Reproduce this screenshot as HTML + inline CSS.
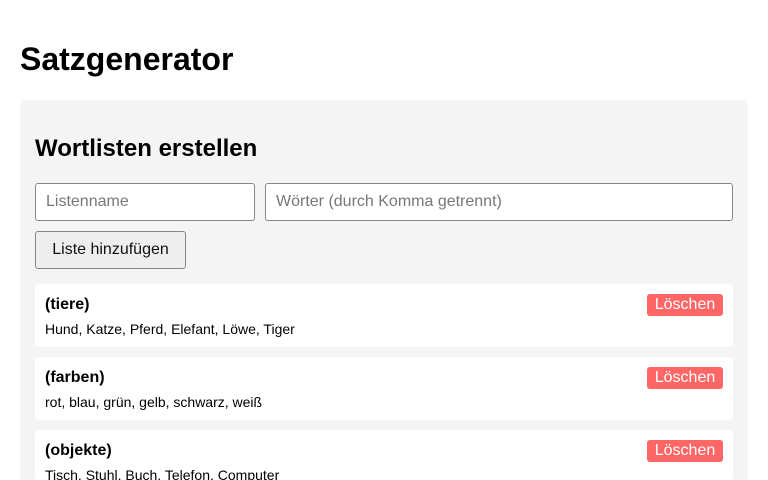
<!DOCTYPE html>
<html style="overflow:hidden;height:480px"><head><meta charset="utf-8"><style>
body{margin:0;padding:0 20px;font-family:"Liberation Sans",Arial,sans-serif;background:#fff;width:728px;height:480px;overflow:hidden;position:relative}
h1{font-size:32px;margin:0;position:absolute;top:40px;left:20px;line-height:38px}
.panel{position:absolute;top:100px;left:20px;width:728px;height:380px;background:#f4f4f4;border-radius:5px 5px 0 0}
h2{position:absolute;top:134px;left:35px;margin:0;font-size:24px;line-height:30px}
input{position:absolute;top:183px;height:38px;box-sizing:border-box;border:1px solid #888;border-radius:3px;font:16px "Liberation Sans",Arial,sans-serif;padding:0 10px;background:#fff}
input::placeholder{color:#777}
.btn{position:absolute;top:231px;left:35px;width:151px;height:38px;box-sizing:border-box;border:1px solid #888;border-radius:3px;background:#eee;font-size:16px;text-align:center;line-height:36px;color:#111}
.item{position:absolute;left:35px;width:698px;height:63px;background:#fff;border-radius:3px}
.t{position:absolute;left:10px;top:12px;font-weight:bold;font-size:16px}
.w{position:absolute;left:10px;top:37px;font-size:14px}
.del{position:absolute;left:612px;top:10px;width:76px;height:22px;background:#f66;color:#fff;border-radius:3px;font-size:16px;text-align:center;line-height:22px}
</style></head><body>
<h1>Satzgenerator</h1>
<div class="panel"></div>
<h2>Wortlisten erstellen</h2>
<input style="left:35px;width:220px" placeholder="Listenname">
<input style="left:265px;width:468px" placeholder="Wörter (durch Komma getrennt)">
<div class="btn">Liste hinzufügen</div>
<div class="item" style="top:284px"><div class="t">(tiere)</div><div class="w">Hund, Katze, Pferd, Elefant, Löwe, Tiger</div><div class="del">Löschen</div></div>
<div class="item" style="top:357px"><div class="t">(farben)</div><div class="w">rot, blau, grün, gelb, schwarz, weiß</div><div class="del">Löschen</div></div>
<div class="item" style="top:430px;height:50px"><div class="t">(objekte)</div><div class="w">Tisch, Stuhl, Buch, Telefon, Computer</div><div class="del">Löschen</div></div>
</body></html>
